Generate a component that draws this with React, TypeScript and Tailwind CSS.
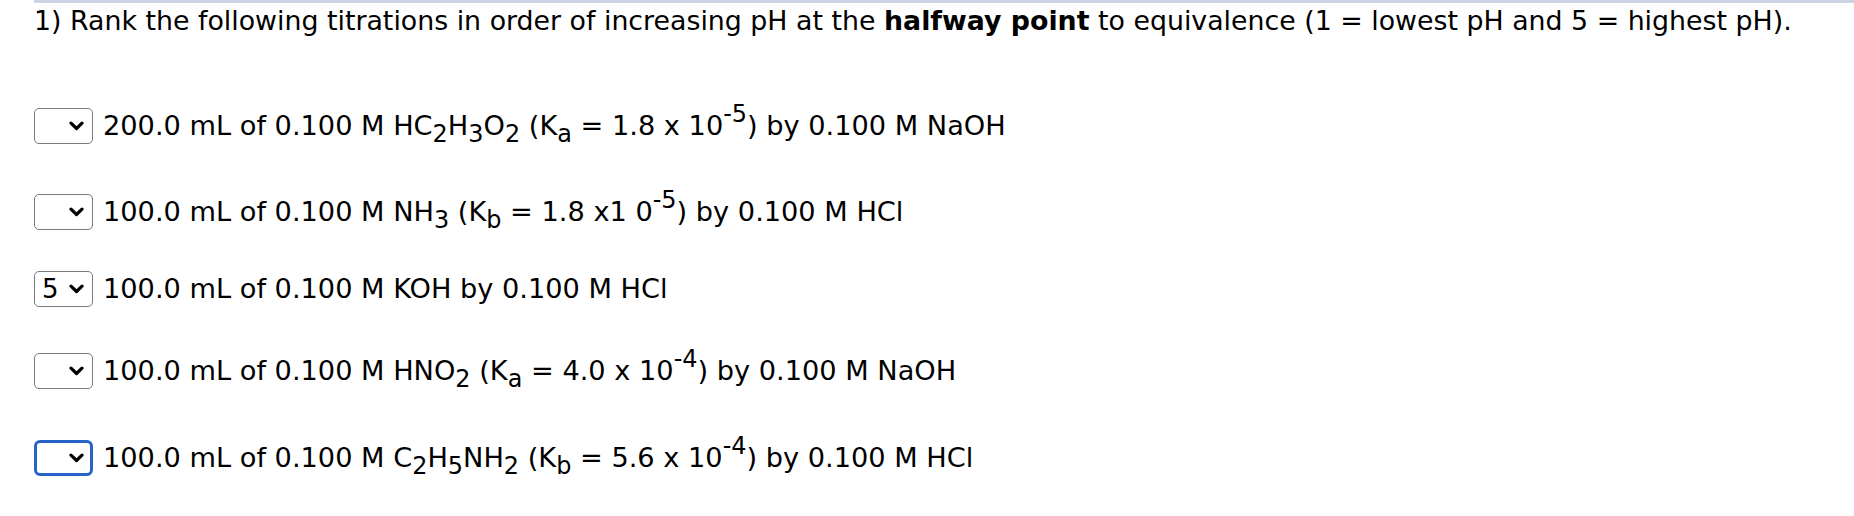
import { useState } from "react";

type Row = {
  id: string;
  label: React.ReactNode;
  value: string;
  mt: string;
};

// gaps between rows differ a little, as in the original worksheet
const rows: Row[] = [
  {
    id: "acetic",
    value: "",
    mt: "mt-[71px]",
    label: (
      <>
        200.0 mL of 0.100 M HC<sub>2</sub>H<sub>3</sub>O<sub>2</sub> (K<sub>a</sub> = 1.8 x 10<sup>-5</sup>) by 0.100 M NaOH
      </>
    ),
  },
  {
    id: "ammonia",
    value: "",
    mt: "mt-[50px]",
    label: (
      <>
        100.0 mL of 0.100 M NH<sub>3</sub> (K<sub>b</sub> = 1.8 x1 0<sup>-5</sup>) by 0.100 M HCl
      </>
    ),
  },
  {
    id: "koh",
    value: "5",
    mt: "mt-[41px]",
    label: <>100.0 mL of 0.100 M KOH by 0.100 M HCl</>,
  },
  {
    id: "nitrous",
    value: "",
    mt: "mt-[46px]",
    label: (
      <>
        100.0 mL of 0.100 M HNO<sub>2</sub> (K<sub>a</sub> = 4.0 x 10<sup>-4</sup>) by 0.100 M NaOH
      </>
    ),
  },
  {
    id: "ethylamine",
    value: "",
    mt: "mt-[51px]",
    label: (
      <>
        100.0 mL of 0.100 M C<sub>2</sub>H<sub>5</sub>NH<sub>2</sub> (K<sub>b</sub> = 5.6 x 10<sup>-4</sup>) by 0.100 M HCl
      </>
    ),
  },
];

function RankSelect({ value, focused, onChange }: { value: string; focused?: boolean; onChange: (v: string) => void }) {
  return (
    <div className="relative shrink-0">
      <select
        value={value}
        onChange={(e) => onChange(e.target.value)}
        className={
          "appearance-none block w-[59px] h-[36px] rounded-[5px] bg-white pl-[7px] py-0 text-[26px] leading-none text-black outline-none " +
          (focused ? "border-[3px] border-[#2563c9] rounded-[6px]" : "border border-[#7a7a7a]")
        }
      >
        <option value=""></option>
        {["1", "2", "3", "4", "5"].map((n) => (
          <option key={n} value={n}>{n}</option>
        ))}
      </select>
      <svg
        className="pointer-events-none absolute right-[9px] top-1/2 -translate-y-1/2"
        width="15"
        height="10"
        viewBox="0 0 15 10"
        fill="none"
      >
        <path d="M2 2.2 L7.5 7.5 L13 2.2" stroke="#000" strokeWidth="3.2" strokeLinecap="round" strokeLinejoin="round" />
      </svg>
    </div>
  );
}

export default function App() {
  const [values, setValues] = useState<Record<string, string>>(
    Object.fromEntries(rows.map((r) => [r.id, r.value]))
  );

  return (
    <div className="min-h-[516px] bg-white text-black font-['DejaVu_Sans','Verdana',sans-serif]">
      <div className="ml-[34px] border-t-[3px] border-[#cdd3e3] pt-[2px]">
        <p className="text-[26.8px] leading-[32px] whitespace-nowrap">
          1) Rank the following titrations in order of increasing pH at the <b>halfway point</b> to equivalence (1 = lowest pH and 5 = highest pH).
        </p>

        <div className="flex flex-col">
          {rows.map((r, i) => (
            <div key={r.id} className={"flex items-center gap-[10px] h-[36px] " + r.mt}>
              <RankSelect
                value={values[r.id]}
                focused={i === rows.length - 1}
                onChange={(v) => setValues({ ...values, [r.id]: v })}
              />
              <span className="text-[27.2px] leading-[32px] whitespace-nowrap [&_sub]:text-[88%] [&_sub]:-bottom-[0.3em] [&_sup]:text-[88%] [&_sup]:-top-[0.55em]">
                {r.label}
              </span>
            </div>
          ))}
        </div>
      </div>
    </div>
  );
}
